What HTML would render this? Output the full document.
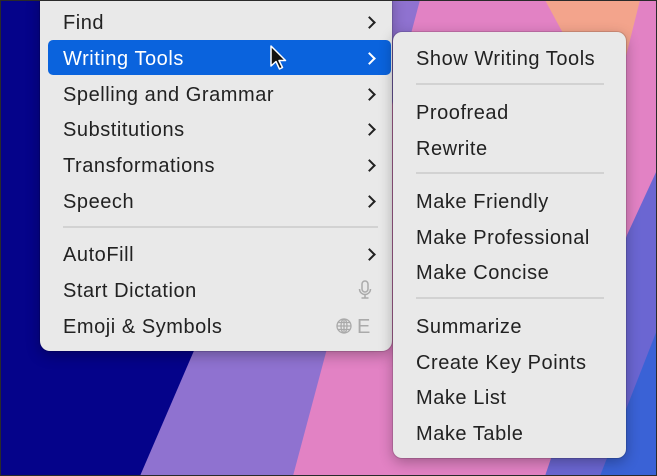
<!DOCTYPE html>
<html><head><meta charset="utf-8"><style>
*{margin:0;padding:0;box-sizing:border-box}
body{width:657px;height:476px;overflow:hidden;position:relative;background:#05038a;font-family:"Liberation Sans",sans-serif;}
svg.bg{position:absolute;left:0;top:0}
.menu{position:absolute;background:#e9e9e9;box-shadow:0 4px 14px rgba(0,0,0,.3),0 0 0 1px rgba(0,0,0,.12);}
.m1{left:40px;top:-10px;width:352px;height:361px;border-radius:10px;}
.m2{left:393px;top:32px;width:233px;height:426px;border-radius:9px;}
.it{position:absolute;font-size:20px;color:#222;line-height:22px;white-space:nowrap;letter-spacing:0.55px}
.hl{position:absolute;left:8px;top:50px;width:343px;height:35px;background:#0a63dd;border-radius:5px}
.chev{position:absolute;width:9px;height:9px;border-right:2.2px solid #222;border-top:2.2px solid #222;transform:rotate(45deg)}
.sep{position:absolute;height:2px;background:#d2d2d2}
.frame{position:absolute;left:0;top:0;width:657px;height:476px;border:1.5px solid #2a2a2a;pointer-events:none}
</style></head><body>
<svg class="bg" width="657" height="476">
<polygon points="345,0 657,0 657,476 140,476" fill="#8f72d0"/>
<polygon points="420,0 657,0 657,476 293,476" fill="#e282c4"/>
<polygon points="545,0 640,0 610,120" fill="#f3a48c"/>
<polygon points="657,170 657,476 545,476 627,235" fill="#6b66d2"/>
<polygon points="657,330 657,476 600,476" fill="#3a62d6"/>
</svg>
<div class="menu m1">
<div class="hl"></div>
</div>
<div class="menu m2"></div>
<div class="it" style="left:63px;top:12px">Find</div>
<div class="it" style="left:63px;top:48px;color:#fff">Writing Tools</div>
<div class="it" style="left:63px;top:84px">Spelling and Grammar</div>
<div class="it" style="left:63px;top:119px">Substitutions</div>
<div class="it" style="left:63px;top:155px">Transformations</div>
<div class="it" style="left:63px;top:191px">Speech</div>
<div class="sep" style="left:63px;top:226px;width:315px"></div>
<div class="it" style="left:63px;top:244px">AutoFill</div>
<div class="it" style="left:63px;top:280px">Start Dictation</div>
<div class="it" style="left:63px;top:316px">Emoji &amp; Symbols</div>
<div class="chev" style="left:365px;top:18px"></div>
<div class="chev" style="left:365px;top:54px;border-color:#fff"></div>
<div class="chev" style="left:365px;top:90px"></div>
<div class="chev" style="left:365px;top:125px"></div>
<div class="chev" style="left:365px;top:161px"></div>
<div class="chev" style="left:365px;top:197px"></div>
<div class="chev" style="left:365px;top:250px"></div>
<svg style="position:absolute;left:357px;top:280px" width="16" height="20"><rect x="5" y="1" width="6" height="11" rx="3" fill="none" stroke="#aaa" stroke-width="1.5"/><path d="M2.5 9a5.5 5.5 0 0 0 11 0M8 14.5v3M4.5 18h7" fill="none" stroke="#aaa" stroke-width="1.5"/></svg>
<svg style="position:absolute;left:336px;top:318px" width="16" height="16"><g fill="none" stroke="#aaa" stroke-width="1.3"><circle cx="8" cy="8" r="7"/><ellipse cx="8" cy="8" rx="3" ry="7"/><path d="M1 8h14M2 4.5h12M2 11.5h12M8 1v14"/></g></svg>
<div class="it" style="left:357px;top:316px;color:#aaa">E</div>
<svg style="position:absolute;left:269px;top:44px" width="22" height="30"><path d="M2 2 L2 22 L7 17.5 L10.5 25 L13.5 23.5 L10 16.5 L16.5 16.5 Z" fill="#111" stroke="#fff" stroke-width="1.5" stroke-linejoin="round"/></svg>
<div class="it" style="left:416px;top:48px">Show Writing Tools</div>
<div class="sep" style="left:416px;top:83px;width:188px"></div>
<div class="it" style="left:416px;top:102px">Proofread</div>
<div class="it" style="left:416px;top:138px">Rewrite</div>
<div class="sep" style="left:416px;top:172px;width:188px"></div>
<div class="it" style="left:416px;top:191px">Make Friendly</div>
<div class="it" style="left:416px;top:227px">Make Professional</div>
<div class="it" style="left:416px;top:262px">Make Concise</div>
<div class="sep" style="left:416px;top:297px;width:188px"></div>
<div class="it" style="left:416px;top:316px">Summarize</div>
<div class="it" style="left:416px;top:352px">Create Key Points</div>
<div class="it" style="left:416px;top:387px">Make List</div>
<div class="it" style="left:416px;top:423px">Make Table</div>
<div class="frame"></div>
</body></html>
